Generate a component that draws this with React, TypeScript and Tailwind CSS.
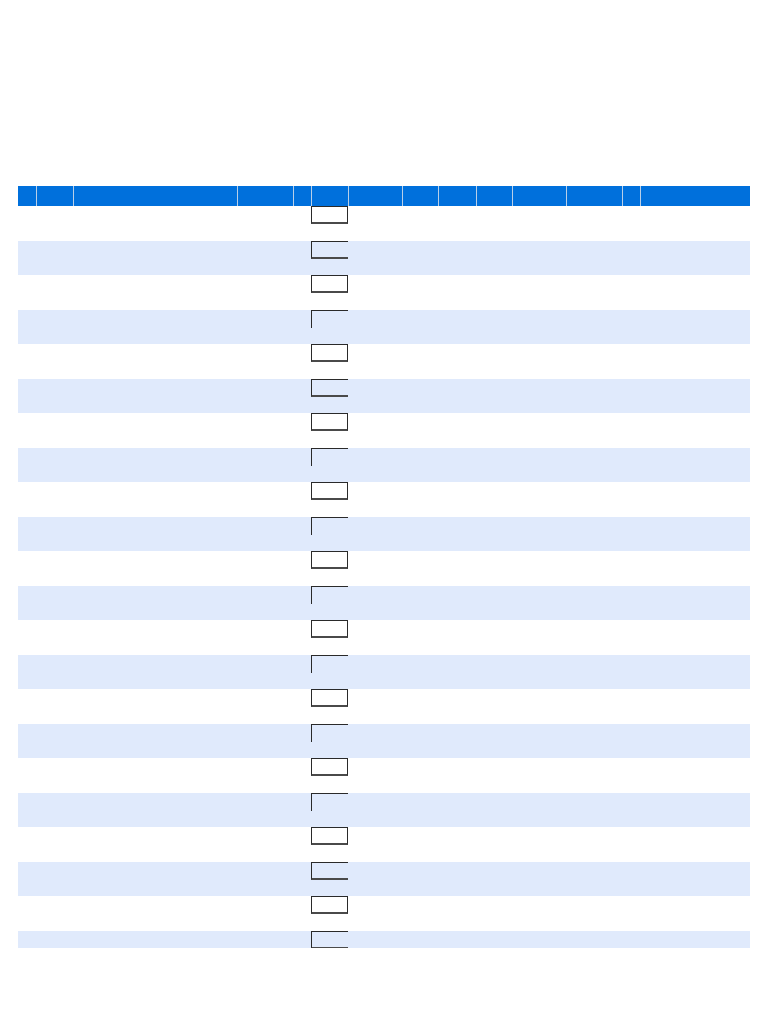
import React from "react";

// Column widths of the header grid, left to right.
const COLS = [18, 37, 164, 56, 18, 37, 54, 36, 38, 36, 54, 56, 18, 109];

// Which borders the little input box in each row shows (the reference is oddly clipped).
type Box = "full" | "ltb" | "lt";
const BOXES: Box[] = [
  "full", "ltb", "full", "lt", "full", "ltb", "full", "lt", "full", "lt", "full",
  "lt", "full", "lt", "full", "lt", "full", "lt", "full", "ltb", "full", "ltb",
];

function InputBox({ kind }: { kind: Box }) {
  const cls =
    kind === "full"
      ? "border border-[#2a2a2a] border-b-2 border-b-[#4a4a4a]"
      : kind === "ltb"
        ? "border-l border-t border-b-2 border-[#2a2a2a] border-b-[#4a4a4a]"
        : "border-l border-t border-[#2a2a2a]";
  return <div className={`h-[18px] w-[37px] ${cls}`} />;
}

export default function App() {
  return (
    <div className="min-h-[1024px] w-[768px] bg-white font-['Liberation_Sans',sans-serif]">
      <div className="ml-[18px] pt-[186px]">
        <div className="h-[762px] w-[732px] overflow-hidden">
          <div className="flex h-[20px] bg-[#0070dc]">
            {COLS.map((w, i) => (
              <div
                key={i}
                style={{ width: w }}
                className={i > 0 ? "h-full border-l border-[#b9cfe8]" : "h-full"}
              />
            ))}
          </div>
          {BOXES.map((b, r) => (
            <div
              key={r}
              className={`flex h-[34.5px] ${r % 2 === 1 ? "bg-[#e0eafc]" : "bg-white"}`}
            >
              {/* cells before the input column: 18+37+164+56+18 */}
              <div className="w-[293px] shrink-0" />
              <InputBox kind={b} />
            </div>
          ))}
        </div>
      </div>
    </div>
  );
}
